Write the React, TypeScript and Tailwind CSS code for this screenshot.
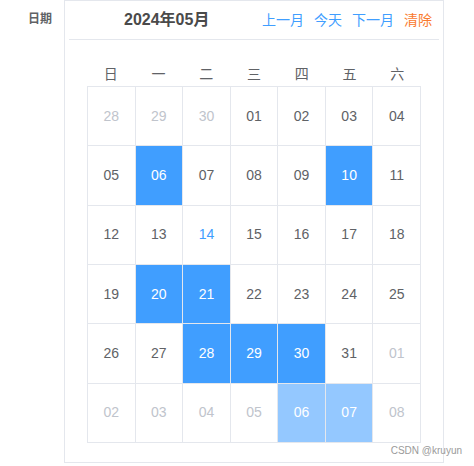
import React from "react";

type Cell = { d: string; kind: "prev" | "cur" | "next"; sel?: boolean; today?: boolean };

const weekdays = ["日", "一", "二", "三", "四", "五", "六"];

const selected = new Set(["06", "10", "20", "21", "28", "29", "30"]);

function buildCells(): Cell[] {
  const cells: Cell[] = [];
  ["28", "29", "30"].forEach((d) => cells.push({ d, kind: "prev" }));
  for (let i = 1; i <= 31; i++) {
    const d = String(i).padStart(2, "0");
    cells.push({ d, kind: "cur", sel: selected.has(d), today: d === "14" });
  }
  ["01", "02", "03", "04", "05", "06", "07", "08"].forEach((d) =>
    cells.push({ d, kind: "next", sel: d === "06" || d === "07" })
  );
  return cells;
}

export default function App() {
  const cells = buildCells();

  return (
    <div
      className="relative w-[474px] h-[466px] bg-white flex"
      style={{ fontFamily: '"Liberation Sans", "Noto Sans CJK SC", sans-serif' }}
    >
      {/* label */}
      <div className="w-[64px] pr-3 pt-[10px] text-right text-[12px] font-bold text-[#606266]">日期</div>

      {/* panel */}
      <div className="w-[380px] h-[463px] border border-[#e4e7ed] flex flex-col">
        <div className="mx-1 h-[39px] border-b border-[#e4e7ed] flex items-center">
          <div className="flex-1 pl-[55px] text-[16px] font-bold text-[#4a4a4a]">2024年05月</div>
          <div className="flex items-center gap-[10px] pr-[7px] text-[14px] text-[#409eff]">
            <span>上一月</span>
            <span>今天</span>
            <span>下一月</span>
            <span className="text-[#fa7a2e]">清除</span>
          </div>
        </div>

        <div className="mx-auto mt-[22px] w-[334px]">
          <div className="grid grid-cols-7 h-[24px] items-center text-center text-[14px] text-[#606266]">
            {weekdays.map((w) => (
              <span key={w}>{w}</span>
            ))}
          </div>
          <div className="grid grid-cols-7 grid-rows-6 h-[357px] border-l border-t border-[#e4e7ed]">
            {cells.map((c, i) => {
              let cls = "text-[#606266] bg-white";
              if (c.kind !== "cur") cls = "text-[#c0c4cc] bg-white";
              if (c.today) cls = "text-[#409eff] bg-white";
              if (c.sel && c.kind === "cur") cls = "text-white bg-[#409eff]";
              if (c.sel && c.kind === "next") cls = "text-white bg-[#94c8ff]";
              return (
                <div
                  key={i}
                  className={`flex items-center justify-center border-r border-b border-[#e4e7ed] text-[14px] ${cls}`}
                >
                  {c.d}
                </div>
              );
            })}
          </div>
        </div>
      </div>

      <div className="absolute right-[12px] bottom-[8px] text-[10px] text-[#9a9a9a]">CSDN @kruyun</div>
    </div>
  );
}
